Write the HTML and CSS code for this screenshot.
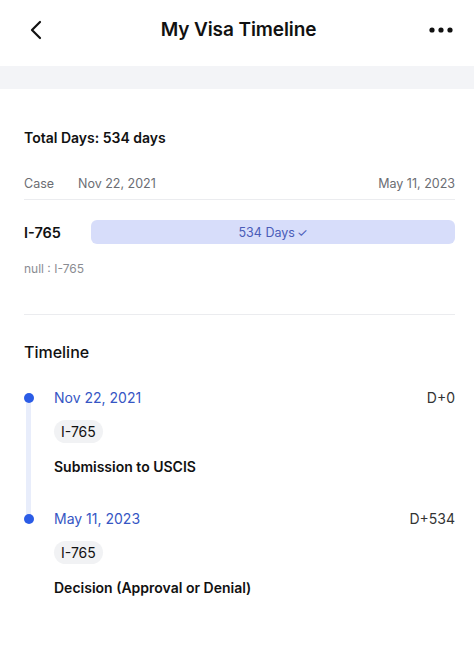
FILE: index.html
```html
<!DOCTYPE html>
<html lang="en">
<head>
    <meta charset="UTF-8">
    <meta name="viewport" content="width=device-width, initial-scale=1.0">
    <title>My Visa Timeline</title>
    <link rel="stylesheet" href="styles.css">
</head>
<body>
    <header class="topbar">
        <button class="icon-btn back">
            <svg width="14" height="20" viewBox="0 0 14 20"><path d="M11 2 L3 10 L11 18" fill="none" stroke="#111" stroke-width="2.2" stroke-linecap="round" stroke-linejoin="round"/></svg>
        </button>
        <h1 class="title">My Visa Timeline</h1>
        <button class="icon-btn more">
            <svg width="24" height="6" viewBox="0 0 24 6"><circle cx="3" cy="3" r="2.6" fill="#111"/><circle cx="12" cy="3" r="2.6" fill="#111"/><circle cx="21" cy="3" r="2.6" fill="#111"/></svg>
        </button>
    </header>
    <div class="band"></div>

    <section class="summary">
        <div class="total">Total Days: 534 days</div>
        <div class="case-head">
            <span class="case-label">Case</span>
            <span class="case-start">Nov 22, 2021</span>
            <span class="case-end">May 11, 2023</span>
        </div>
        <div class="case-row">
            <span class="case-name">I-765</span>
            <div class="bar">534 Days<span class="check">&#10003;</span></div>
        </div>
        <div class="case-note">null : I-765</div>
    </section>

    <section class="timeline">
        <h2 class="section-title">Timeline</h2>
        <div class="events">
            <div class="rail"></div>
            <div class="event">
                <span class="dot"></span>
                <div class="event-head">
                    <span class="event-date">Nov 22, 2021</span>
                    <span class="event-day">D+0</span>
                </div>
                <span class="chip">I-765</span>
                <div class="event-title">Submission to USCIS</div>
            </div>
            <div class="event">
                <span class="dot"></span>
                <div class="event-head">
                    <span class="event-date">May 11, 2023</span>
                    <span class="event-day">D+534</span>
                </div>
                <span class="chip">I-765</span>
                <div class="event-title">Decision (Approval or Denial)</div>
            </div>
        </div>
    </section>
</body>
</html>
```

FILE: styles.css
```css
body {
    margin: 0;
    font-family: Inter, "Noto Sans", sans-serif;
    color: #111;
    background: #fff;
}
.topbar {
    height: 66px;
    display: flex;
    align-items: center;
    justify-content: space-between;
    padding: 0 21px 7px 24px;
    box-sizing: border-box;
}
.icon-btn {
    border: none;
    background: none;
    padding: 0;
    display: flex;
    align-items: center;
    width: 40px;
}
.more {
    justify-content: flex-end;
}
.back svg {
    margin-left: 5px;
}
.title {
    margin: 0;
    font-size: 19px;
    font-weight: 600;
    letter-spacing: -0.1px;
}
.band {
    height: 23px;
    background: #f3f4f7;
}
.summary {
    margin: 0 19px 0 24px;
    padding-top: 40px;
    padding-bottom: 38px;
    border-bottom: 1px solid #ebecef;
}
.total {
    font-size: 14px;
    font-weight: 600;
    line-height: 18px;
}
.case-head {
    display: flex;
    font-size: 12.5px;
    color: #6b6d73;
    margin-top: 29px;
    padding-bottom: 7px;
    border-bottom: 1px solid #ebecef;
    line-height: 16px;
}
.case-label {
    width: 54px;
}
.case-end {
    margin-left: auto;
}
.case-row {
    display: flex;
    align-items: center;
    margin-top: 20px;
}
.case-name {
    width: 67px;
    font-size: 14.5px;
    font-weight: 600;
}
.bar {
    flex: 1;
    height: 24px;
    border-radius: 6px;
    background: #d7ddfa;
    color: #4a5cb8;
    font-size: 12.5px;
    display: flex;
    align-items: center;
    justify-content: center;
}
.check {
    font-size: 12px;
    margin-left: 2px;
}
.case-note {
    font-size: 12px;
    color: #8a8c92;
    margin-top: 18px;
    line-height: 14px;
}
.timeline {
    padding: 27px 19px 0 24px;
}
.section-title {
    margin: 0;
    font-size: 16px;
    font-weight: 500;
    line-height: 20px;
}
.events {
    position: relative;
    margin-top: 27px;
}
.rail {
    position: absolute;
    left: 2px;
    top: 8px;
    width: 5px;
    height: 118px;
    background: #e8edfb;
}
.event {
    position: relative;
    padding-left: 30px;
    padding-bottom: 34px;
}
.dot {
    position: absolute;
    left: 0;
    top: 4px;
    width: 10px;
    height: 10px;
    border-radius: 50%;
    background: #2b5ce6;
}
.event-head {
    display: flex;
    justify-content: space-between;
    font-size: 14px;
    line-height: 18px;
}
.event-date {
    color: #3656c4;
}
.event-day {
    color: #333;
}
.chip {
    display: inline-block;
    margin-top: 13px;
    padding: 3px 7px;
    font-size: 14px;
    line-height: 17px;
    border-radius: 12px;
    background: #f1f2f4;
}
.event-title {
    margin-top: 15px;
    font-size: 14px;
    font-weight: 600;
    line-height: 18px;
}
```
